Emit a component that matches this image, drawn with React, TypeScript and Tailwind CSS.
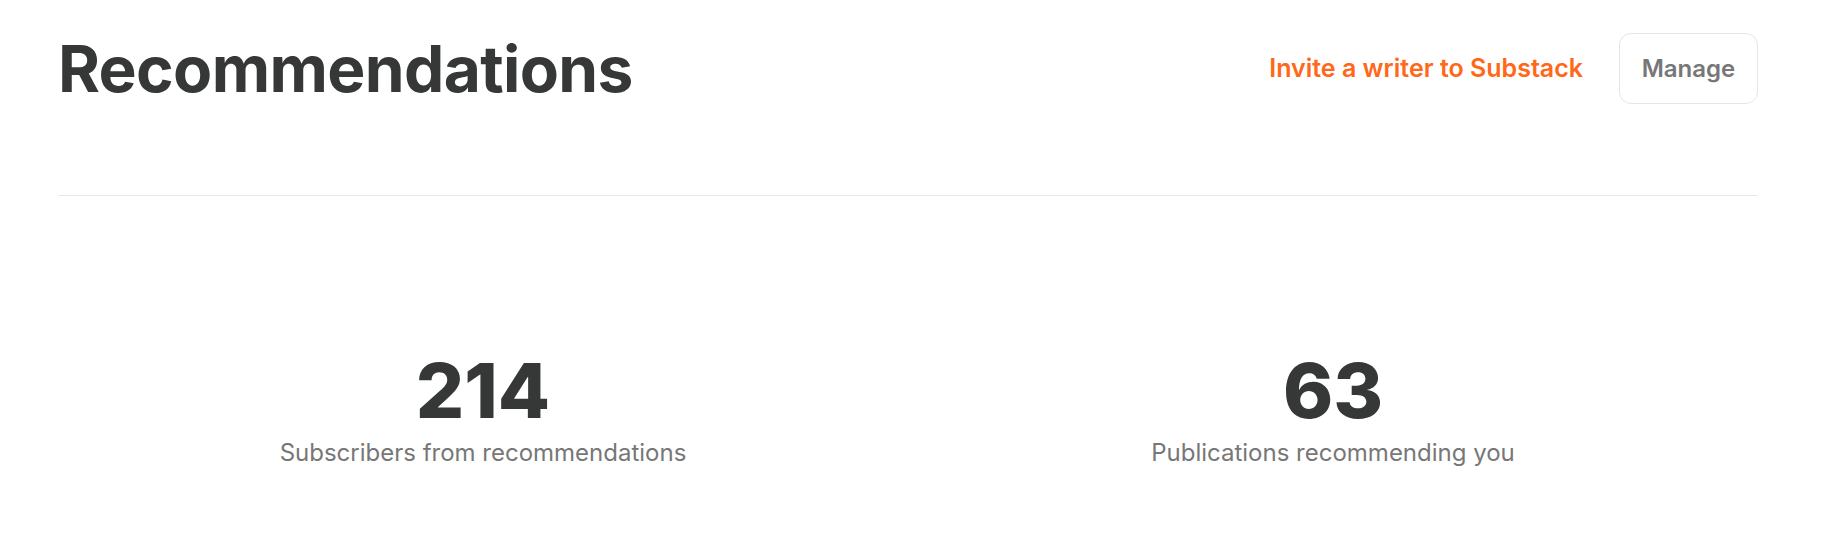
import React from "react";

const stats = [
  { value: "214", label: "Subscribers from recommendations" },
  { value: "63", label: "Publications recommending you" },
];

export default function App() {
  return (
    <div className="min-h-screen w-full bg-white font-['Inter','Liberation_Sans',sans-serif]">
      <div className="ml-[58px] w-[1700px] pt-[33px]">
        {/* Header */}
        <div className="flex h-[71px] items-center justify-between">
          <h1 className="text-[64px] font-bold leading-none tracking-[-0.01em] text-[#363737]">
            Recommendations
          </h1>
          <div className="flex items-center gap-[36px]">
            <a href="#" className="text-[25px] font-semibold text-[#ff6719]">
              Invite a writer to Substack
            </a>
            <button className="h-[71px] w-[139px] rounded-[12px] border border-[#e6e6e6] bg-white text-[24px] font-semibold text-[#777777]">
              Manage
            </button>
          </div>
        </div>

        <div className="mt-[91px] h-px bg-[#e8e8e8]" />

        {/* Stats */}
        <div className="mt-[156px] grid grid-cols-2">
          {stats.map((s) => (
            <div key={s.label} className="flex flex-col items-center">
              <div className="text-[76px] font-extrabold leading-none text-[#363737]">
                {s.value}
              </div>
              <div className="mt-[9px] text-[24px] leading-[32px] text-[#777777]">
                {s.label}
              </div>
            </div>
          ))}
        </div>
      </div>
    </div>
  );
}
